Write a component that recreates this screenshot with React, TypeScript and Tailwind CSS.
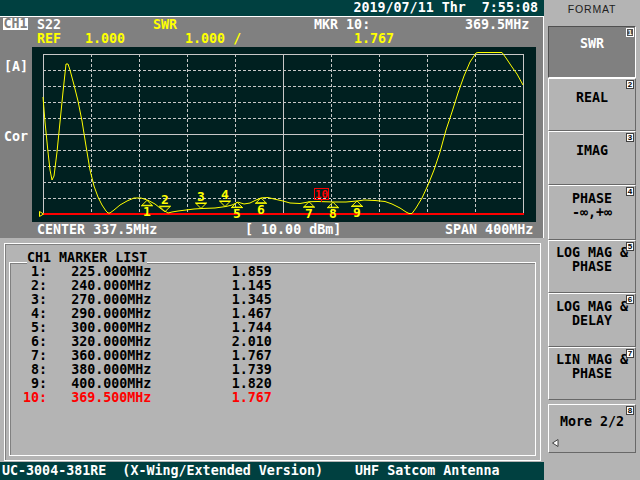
import React from 'react';

const mono = "font-['DejaVu_Sans_Mono','Liberation_Mono',monospace]";

const markerRows = [
  ['1', '225.000MHz', '1.859'],
  ['2', '240.000MHz', '1.145'],
  ['3', '270.000MHz', '1.345'],
  ['4', '290.000MHz', '1.467'],
  ['5', '300.000MHz', '1.744'],
  ['6', '320.000MHz', '2.010'],
  ['7', '360.000MHz', '1.767'],
  ['8', '380.000MHz', '1.739'],
  ['9', '400.000MHz', '1.820'],
  ['10', '369.500MHz', '1.767'],
];

// trace in screen coords (svg viewBox matches page pixels)
const trace = [
  [43, 97], [45, 122], [48, 152], [50, 170], [52, 180], [54, 176], [57, 152], [60, 122],
  [63, 92], [66, 64], [68, 64], [70, 70], [74, 85], [78, 101], [82, 121], [86, 146],
  [90, 170], [94, 186], [98, 197], [102, 205], [106, 211], [108, 213], [110, 213],
  [114, 210], [120, 205], [127, 201], [134, 198], [141, 198], [148, 200.3], [155, 204],
  [160, 208], [164, 211], [166, 211.7], [168, 213], [172, 212], [178, 211], [186, 210],
  [194, 209], [202, 208.5], [215, 208], [226, 206.5], [232, 205], [238, 202.1], [244, 204],
  [250, 203], [256, 200], [262, 197.8], [268, 197.5], [274, 199], [283, 201], [290, 203],
  [300, 203.5], [310, 201.7], [318, 201.5], [334, 202], [346, 202], [358, 200.9],
  [364, 200], [375, 200.5], [385, 201.5], [392, 204], [400, 208], [406, 212], [409, 213.5],
  [412, 213.5], [416, 208], [422, 198], [428, 185], [434, 170], [440, 152], [446, 130],
  [452, 112], [458, 93], [464, 76], [470, 62], [476, 53], [478, 52.5], [502, 52.5],
  [506, 58], [512, 67], [517, 74], [523, 85],
];

const marks = [
  { n: '1', x: 147, y: 200.3, up: true },
  { n: '2', x: 165, y: 211.7, up: false },
  { n: '3', x: 201, y: 208.5, up: false },
  { n: '4', x: 225, y: 206.5, up: false },
  { n: '5', x: 237, y: 202.1, up: true },
  { n: '6', x: 261, y: 197.8, up: true },
  { n: '7', x: 309, y: 201.7, up: true },
  { n: '8', x: 333, y: 202.2, up: true },
  { n: '9', x: 357, y: 200.9, up: true },
];

const menu = [
  { n: '1', lines: ['SWR'], h: 'h-[52px]', pt: 'pt-[10px]', active: true },
  { n: '2', lines: ['REAL'], h: 'h-[53px]', pt: 'pt-[12px]' },
  { n: '3', lines: ['IMAG'], h: 'h-[54px]', pt: 'pt-[12px]' },
  { n: '4', lines: ['PHASE', '-∞,+∞'], h: 'h-[55px]', pt: 'pt-[6px]' },
  { n: '5', lines: ['LOG MAG &', 'PHASE'], h: 'h-[53px]', pt: 'pt-[5px]' },
  { n: '6', lines: ['LOG MAG &', 'DELAY'], h: 'h-[54px]', pt: 'pt-[6px]' },
  { n: '7', lines: ['LIN MAG &', 'PHASE'], h: 'h-[53px]', pt: 'pt-[5px]' },
];

function Graph() {
  const xs = Array.from({ length: 11 }, (_, i) => 43 + 48 * i);
  const ys = Array.from({ length: 10 }, (_, j) => 54 + 16 * j);
  return (
    <svg width={504} height={175} viewBox="32 47 504 175" className="block bg-[#002020]" shapeRendering="crispEdges">
      {xs.map((x, i) => (
        <line key={'v' + i} x1={x + 0.5} y1={54} x2={x + 0.5} y2={214} stroke="#c8c8c8" strokeWidth={1}
          strokeDasharray={i === 0 || i === 5 || i === 10 ? undefined : '3 2'} />
      ))}
      {ys.map((y, j) => (
        <line key={'h' + j} x1={43} y1={y + 0.5} x2={524} y2={y + 0.5} stroke="#c8c8c8" strokeWidth={1}
          strokeDasharray={j === 0 || j === 5 ? undefined : '3 2'} />
      ))}
      <line x1={43} y1={214} x2={524} y2={214} stroke="#ff0000" strokeWidth={2} />
      <polygon points="39.5,211.5 43.5,214 39.5,216.5" fill="none" stroke="#ffff00" strokeWidth={1} shapeRendering="auto" />
      <polyline points={trace.map((p) => p.join(',')).join(' ')} fill="none" stroke="#ffff00" strokeWidth={1} shapeRendering="auto" />
      <g shapeRendering="auto" fontFamily="DejaVu Sans Mono" fontWeight="bold" fontSize={13} fill="#ffff00">
        {marks.map((m) =>
          m.up ? (
            <g key={m.n}>
              <polygon points={`${m.x},${m.y} ${m.x - 5},${m.y + 5} ${m.x + 5},${m.y + 5}`} fill="none" stroke="#ffff00" />
              <line x1={m.x - 6} y1={m.y + 5.5} x2={m.x + 6} y2={m.y + 5.5} stroke="#ffff00" />
              <text x={m.x} y={m.y + 11.5} textAnchor="middle" dominantBaseline="central">{m.n}</text>
            </g>
          ) : (
            <g key={m.n}>
              <line x1={m.x - 6} y1={m.y - 5.5} x2={m.x + 6} y2={m.y - 5.5} stroke="#ffff00" />
              <polygon points={`${m.x},${m.y} ${m.x - 5},${m.y - 5} ${m.x + 5},${m.y - 5}`} fill="none" stroke="#ffff00" />
              <text x={m.x} y={m.y - 12} textAnchor="middle" dominantBaseline="central">{m.n}</text>
            </g>
          )
        )}
        <rect x={314.5} y={188.5} width={14} height={11} fill="none" stroke="#ff0000" />
        <text x={321.5} y={194.5} textAnchor="middle" dominantBaseline="central" fontSize={11} fill="#ff0000">10</text>
        <line x1={321.5} y1={199.5} x2={321.5} y2={202} stroke="#ff0000" />
      </g>
    </svg>
  );
}

function MenuButton({ n, lines, h, pt, active }: { n: string; lines: string[]; h: string; pt: string; active?: boolean }) {
  return (
    <div
      className={`relative flex flex-col items-center ${h} ${pt} border ${
        active
          ? 'bg-[#808080] text-white border-t-[#505050] border-l-[#505050] border-r-white border-b-white'
          : 'text-black border-t-white border-l-white border-r-[#686868] border-b-[#686868]'
      }`}
    >
      {lines.map((l) => (
        <div key={l} className="whitespace-pre">{l}</div>
      ))}
      <span
        className={`absolute top-[1px] right-[1px] w-[8px] h-[9px] flex items-center justify-center text-[8px] leading-[8px] border font-['Liberation_Sans',sans-serif] ${
          active ? 'bg-[#505050] text-white border-white' : 'bg-white text-black border-[#404040]'
        }`}
      >
        {n}
      </span>
    </div>
  );
}

export default function App() {
  return (
    <div className={`w-[640px] h-[480px] flex overflow-hidden bg-[#b4b4b4] ${mono} font-bold text-[13.33px] leading-[14px]`}>
      {/* left side */}
      <div className="w-[544px] flex flex-col">
        <div className="h-[16px] bg-[#004040] text-white flex justify-end pr-[6px] leading-[16px] whitespace-pre">
          2019/07/11 Thr  7:55:08
        </div>

        {/* trace panel */}
        <div className="h-[222px] bg-[#808080] border-t border-r border-white flex flex-col">
          <div className="h-[30px] pt-[1px]">
            <div className="flex h-[14px] pl-[3px] text-white whitespace-pre">
              <span className="w-[25px] h-[12px] leading-[12px] bg-white text-[#808080] text-center">CH1</span>
              <span className="w-[9px]" />
              <span className="w-[116px]">S22</span>
              <span className="w-[161px] text-[#ffff00]">SWR</span>
              <span className="w-[151px]">MKR 10:</span>
              <span>369.5MHz</span>
            </div>
            <div className="flex h-[14px] pl-[37px] text-[#ffff00] whitespace-pre">
              <span className="w-[48px]">REF</span>
              <span className="w-[100px]">1.000</span>
              <span className="w-[169px]">1.000 /</span>
              <span>1.767</span>
            </div>
          </div>
          <div className="flex h-[175px]">
            <div className="w-[32px] pl-[4px] pt-[13px] text-white">
              <div>[A]</div>
              <div className="mt-[56px]">Cor</div>
            </div>
            <Graph />
          </div>
          <div className="flex pt-[1px] pl-[37px] text-white whitespace-pre">
            <span className="w-[208px]">CENTER 337.5MHz</span>
            <span className="w-[200px]">[ 10.00 dBm]</span>
            <span>SPAN 400MHz</span>
          </div>
        </div>

        {/* marker list */}
        <div className="h-[224px] pt-[5px] pl-[4px] pr-[3px]">
          <div className="h-[218px] border border-white shadow-[inset_1px_1px_0_#808080] pt-[18px] px-[4px]">
            <div className="h-[194px] border border-white shadow-[inset_1px_1px_0_#808080] text-black">
              <div className="-mt-[12px] ml-[17px] w-fit bg-[#b4b4b4]">CH1 MARKER LIST</div>
              <div className="pl-[13px]">
                {markerRows.map(([n, f, v]) => (
                  <div key={n} className={`whitespace-pre ${n === '10' ? 'text-[#ff0000]' : ''}`}>
                    {`${n.padStart(2, ' ')}:   ${f}          ${v}`}
                  </div>
                ))}
              </div>
            </div>
          </div>
        </div>

        <div className="h-[18px] bg-[#004040] text-white pt-[2px] pl-[2px] whitespace-pre">
          UC-3004-381RE  (X-Wing/Extended Version)    UHF Satcom Antenna
        </div>
      </div>

      {/* softkey menu */}
      <div className="w-[96px] flex flex-col px-[4px]">
        <div className="h-[26px] pt-[3px] text-center font-normal text-[10.5px] leading-[12px] tracking-[0.8px] text-[#202020] font-['Liberation_Sans',sans-serif]">
          FORMAT
        </div>
        {menu.map((m) => (
          <MenuButton key={m.n} {...m} />
        ))}
        <div className="mt-[4px] h-[49px] pt-[10px] border border-t-white border-l-white border-r-[#686868] border-b-[#686868] flex flex-col items-center relative">
          <div className="whitespace-pre">More 2/2</div>
          <svg width={7} height={8} className="self-start ml-[3px] mt-[10px]">
            <polygon points="6,0.5 6,7.5 0.5,4" fill="#ffffff" stroke="#404040" strokeWidth={1} />
          </svg>
          <span className="absolute top-[1px] right-[1px] w-[8px] h-[9px] flex items-center justify-center text-[8px] leading-[8px] border bg-white text-black border-[#404040] font-['Liberation_Sans',sans-serif]">
            8
          </span>
        </div>
      </div>
    </div>
  );
}
